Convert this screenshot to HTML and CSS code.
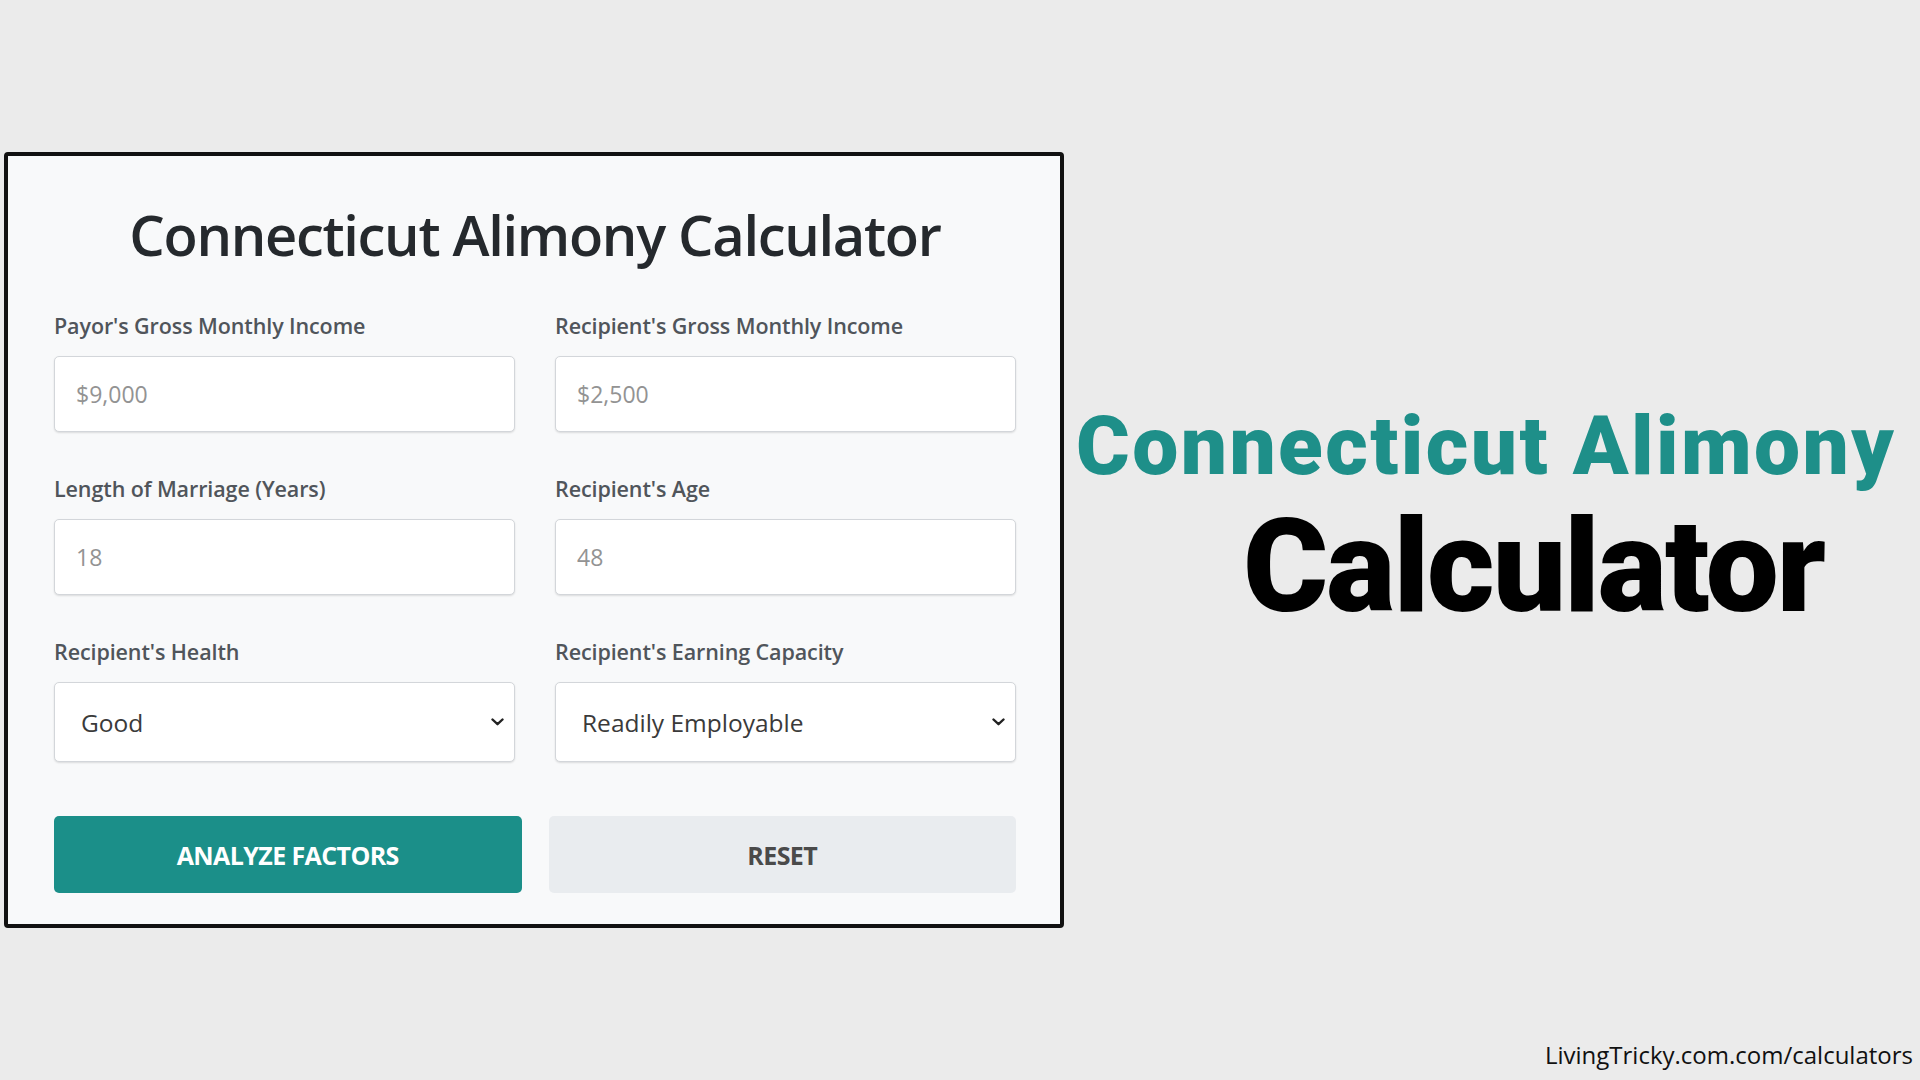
FILE: index.html
```html
<!DOCTYPE html>
<html lang="en">
<head>
<meta charset="utf-8">
<title>Connecticut Alimony Calculator</title>
<link rel="stylesheet" href="styles.css">
</head>
<body>
<div class="page">
  <div class="main">
    <section class="card">
      <h1 class="card-title">Connecticut Alimony Calculator</h1>
      <div class="form">
        <div class="field">
          <label class="label">Payor's Gross Monthly Income</label>
          <input class="input" type="text" placeholder="$9,000">
        </div>
        <div class="field">
          <label class="label">Recipient's Gross Monthly Income</label>
          <input class="input" type="text" placeholder="$2,500">
        </div>
        <div class="field">
          <label class="label">Length of Marriage (Years)</label>
          <input class="input" type="text" placeholder="18">
        </div>
        <div class="field">
          <label class="label">Recipient's Age</label>
          <input class="input" type="text" placeholder="48">
        </div>
        <div class="field">
          <label class="label">Recipient's Health</label>
          <div class="select-wrap">
            <select class="select"><option>Good</option><option>Fair</option><option>Poor</option></select>
            <svg class="chev" width="13" height="8" viewBox="0 0 13 8"><path d="M1.5 1.5 L6.5 6.2 L11.5 1.5" fill="none" stroke="#222" stroke-width="2.4" stroke-linecap="round" stroke-linejoin="round"/></svg>
          </div>
        </div>
        <div class="field">
          <label class="label">Recipient's Earning Capacity</label>
          <div class="select-wrap">
            <select class="select"><option>Readily Employable</option><option>Limited</option></select>
            <svg class="chev" width="13" height="8" viewBox="0 0 13 8"><path d="M1.5 1.5 L6.5 6.2 L11.5 1.5" fill="none" stroke="#222" stroke-width="2.4" stroke-linecap="round" stroke-linejoin="round"/></svg>
          </div>
        </div>
      </div>
      <div class="actions">
        <button class="btn btn-primary" type="button">Analyze Factors</button>
        <button class="btn btn-secondary" type="button">Reset</button>
      </div>
    </section>
    <div class="hero">
      <div class="hero-line1">Connecticut Alimony</div>
      <div class="hero-line2">Calculator</div>
    </div>
  </div>
  <div class="footer">LivingTricky.com.com/calculators</div>
</div>
</body>
</html>
```

FILE: styles.css
```css
* { box-sizing: border-box; }
html, body { margin: 0; padding: 0; }
body {
  background: #ebebeb;
  font-family: "Open Sans", "Noto Sans", sans-serif;
  width: 1920px;
  height: 1080px;
  overflow: hidden;
}
.page {
  height: 1080px;
  display: flex;
  flex-direction: column;
}
.main {
  display: flex;
  align-items: flex-start;
  padding-top: 152px;
  padding-left: 4px;
}
.card {
  width: 1060px;
  height: 776px;
  background: #f8f9fa;
  border: 4px solid #111;
  border-radius: 4px;
  padding: 40px 44px 0 46px;
  flex-shrink: 0;
}
.card-title {
  margin: 0 0 42px;
  text-align: center;
  font-size: 56px;
  line-height: 76px;
  font-weight: 600;
  color: #25292d;
  letter-spacing: -1.3px;
}
.form {
  display: grid;
  grid-template-columns: 1fr 1fr;
  column-gap: 40px;
  row-gap: 45px;
}
.label {
  display: block;
  font-size: 21.5px;
  line-height: 24px;
  font-weight: 600;
  color: #50555b;
  letter-spacing: -0.1px;
  margin-bottom: 18px;
}
.input {
  display: block;
  width: 100%;
  height: 76px;
  background: #fff;
  border: 1px solid #d3d6da;
  border-radius: 5px;
  box-shadow: 0 1px 2px rgba(0,0,0,0.12);
  padding: 0 21px;
  font-family: "Open Sans", sans-serif;
  font-size: 23px;
  color: #333;
  outline: none;
}
.input::placeholder { color: #939393; }
.select-wrap { position: relative; }
.select {
  display: block;
  width: 100%;
  height: 80px;
  appearance: none;
  -webkit-appearance: none;
  background: #fff;
  border: 1px solid #d3d6da;
  border-radius: 5px;
  box-shadow: 0 1px 2px rgba(0,0,0,0.12);
  padding: 0 40px 0 26px;
  font-family: "Open Sans", sans-serif;
  font-size: 24.5px;
  color: #3a3a3a;
  outline: none;
}
.chev {
  position: absolute;
  right: 11px;
  top: 50%;
  transform: translateY(-50%);
}
.actions {
  display: grid;
  grid-template-columns: 1fr 1fr;
  column-gap: 27px;
  margin-top: 54px;
}
.btn {
  height: 77px;
  border: none;
  border-radius: 5px;
  font-family: "Open Sans", sans-serif;
  font-size: 25px;
  font-weight: 700;
  text-transform: uppercase;
  letter-spacing: -0.6px;
  cursor: pointer;
}
.btn-primary { background: #1b8f89; color: #fff; }
.btn-secondary { background: #e9ecef; color: #4a4a4a; }
.hero {
  margin-left: 12px;
  padding-top: 253px;
  font-family: Roboto, "Liberation Sans", sans-serif;
  font-weight: 900;
}
.hero-line1 {
  font-size: 82px;
  line-height: 82px;
  color: #1e8f89;
  letter-spacing: 2.4px;
  white-space: nowrap;
}
.hero-line2 {
  margin-top: 15px;
  margin-left: 167px;
  font-size: 130px;
  line-height: 130px;
  color: #000;
  letter-spacing: -2px;
  white-space: nowrap;
}
.footer {
  margin-top: auto;
  text-align: right;
  padding: 0 7px 10px 0;
  font-family: "Open Sans", sans-serif;
  font-size: 24px;
  line-height: 30px;
  color: #111;
}
```
